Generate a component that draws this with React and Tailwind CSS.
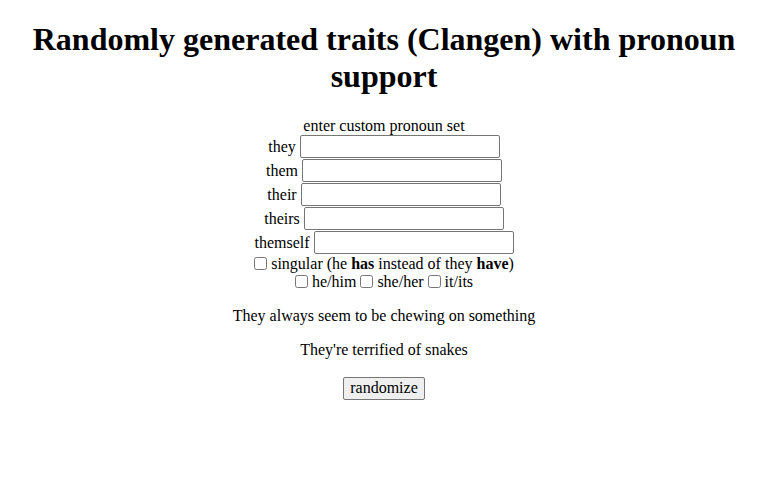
import React, { useState } from 'react';

const FIELDS = ['they', 'them', 'their', 'theirs', 'themself'];

const TRAITS = [
  'They always seem to be chewing on something',
  "They're terrified of snakes",
];

function Check() {
  return <input type="checkbox" className="w-[13px] h-[13px] m-0 align-[-1px]" />;
}

export default function App() {
  const [values, setValues] = useState({});

  return (
    <div className="min-h-screen bg-white text-black text-center text-base leading-[normal] font-['Liberation_Serif',_'Times_New_Roman',_serif]">
      <h1 className="text-[32px] font-bold my-[21.44px] mx-2 leading-[normal]">
        Randomly generated traits (Clangen) with pronoun support
      </h1>

      {/* custom pronoun form */}
      <div>
        <div className="h-[18px]">enter custom pronoun set</div>
        {FIELDS.map(f => (
          <div key={f} className="h-6 flex items-center justify-center gap-1">
            <label>{f}</label>
            <input
              type="text"
              value={values[f] || ''}
              onChange={e => setValues({ ...values, [f]: e.target.value })}
              className="w-[200px] h-[23px] border border-[#767676] rounded-[2px] px-[2px] bg-white text-[13px]"
            />
          </div>
        ))}
        <div className="h-[18px] leading-[18px]">
          <Check /> singular (he <b>has</b> instead of they <b>have</b>)
        </div>
        <div className="h-[18px] leading-[18px]">
          <Check /> he/him <Check /> she/her <Check /> it/its
        </div>
      </div>

      {TRAITS.map(t => (
        <p key={t} className="my-4">{t}</p>
      ))}

      <div className="pt-[2px]">
        <button className="h-[23px] px-[6px] border border-[#767676] rounded-[2px] bg-[#efefef] leading-none">
          randomize
        </button>
      </div>
    </div>
  );
}
